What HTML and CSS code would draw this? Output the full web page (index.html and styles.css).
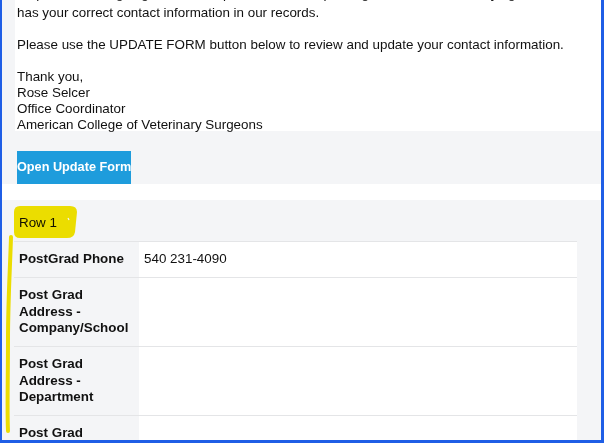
FILE: index.html
```html
<!DOCTYPE html>
<html lang="en">
<head>
    <meta charset="UTF-8">
    <title>Contact Information Update</title>
    <link rel="stylesheet" href="styles.css">
</head>
<body>
    <div class="frame">
        <div class="message">
            <p class="clipped">As part of our ongoing effort to keep our membership listing current, we are verifying that ACVS</p>
            <p>has your correct contact information in our records.</p>
            <p class="gap">Please use the UPDATE FORM button below to review and update your contact information.</p>
            <p class="gap">Thank you,</p>
            <p>Rose Selcer</p>
            <p>Office Coordinator</p>
            <p>American College of Veterinary Surgeons</p>
        </div>

        <div class="action-band">
            <a class="update-button" href="#">Open Update Form</a>
        </div>

        <div class="spacer"></div>

        <div class="record">
            <div class="record-title">Row 1</div>
            <table class="record-table">
                <tr>
                    <th>PostGrad Phone</th>
                    <td>540 231-4090</td>
                </tr>
                <tr>
                    <th>Post Grad Address - Company/School</th>
                    <td></td>
                </tr>
                <tr>
                    <th>Post Grad Address - Department</th>
                    <td></td>
                </tr>
                <tr>
                    <th>Post Grad Address - Street</th>
                    <td></td>
                </tr>
            </table>
        </div>

        <!-- hand-drawn marker annotation -->
        <svg class="marker" width="604" height="443" viewBox="0 0 604 443">
            <path d="M20 206 H70 Q77 206 77 212 L75 232 Q74 238 67 238 H20 Q14 238 14 232 V212 Q14 206 20 206 Z" fill="#f6e600"/>
            <path d="M11 237 C10 270 8 300 8 340 C8 380 7 410 8 431" stroke="#f6e600" stroke-width="4" fill="none" stroke-linecap="round"/>
            <path d="M68 218 l1 2" stroke="#fff" stroke-width="1.2"/>
        </svg>
    </div>
</body>
</html>
```

FILE: styles.css
```css
* {
    margin: 0;
    padding: 0;
    box-sizing: border-box;
}

body {
    width: 604px;
    height: 443px;
    overflow: hidden;
    font-family: 'Liberation Sans', Arial, sans-serif;
    font-size: 13.4px;
    color: #111;
    background: white;
}

.frame {
    position: relative;
    width: 604px;
    height: 443px;
    overflow: hidden;
    background: #f4f5f7;
    border-left: 2px solid #1f5ee6;
    border-right: 3px solid #1f5ee6;
    border-bottom: 3px solid #1f5ee6;
}

/* Message */
.message {
    margin-top: -14px;
    margin-left: 13px;
    margin-bottom: -2px;
    padding-left: 2px;
    background: white;
    line-height: 16px;
}

.message .clipped {
    white-space: nowrap;
    overflow: hidden;
    margin-bottom: 3px;
}

.message .gap {
    margin-top: 16px;
}

/* Button band */
.action-band {
    height: 53px;
    padding: 20px 0 0 15px;
    background: #f4f5f7;
}

.update-button {
    display: inline-block;
    height: 33px;
    line-height: 33px;
    background: #1e9cdc;
    color: white;
    font-weight: bold;
    font-size: 12.7px;
    text-decoration: none;
}

.spacer {
    height: 16px;
    background: white;
}

/* Record */
.record {
    padding: 0 24px 0 12px;
}

.record-title {
    height: 41px;
    padding: 15px 0 0 5px;
    line-height: 16px;
}

.record-table {
    width: 100%;
    border-collapse: collapse;
    background: white;
}

.record-table tr {
    border-top: 1px solid #e4e5e7;
}

.record-table th,
.record-table td {
    padding: 9px 5px 9.5px;
    line-height: 16.5px;
    text-align: left;
    vertical-align: top;
}

.record-table th {
    width: 125px;
    font-weight: bold;
    background: #f4f5f7;
}

.marker {
    position: absolute;
    left: -2px;
    top: 0;
    mix-blend-mode: multiply;
    pointer-events: none;
}
```
